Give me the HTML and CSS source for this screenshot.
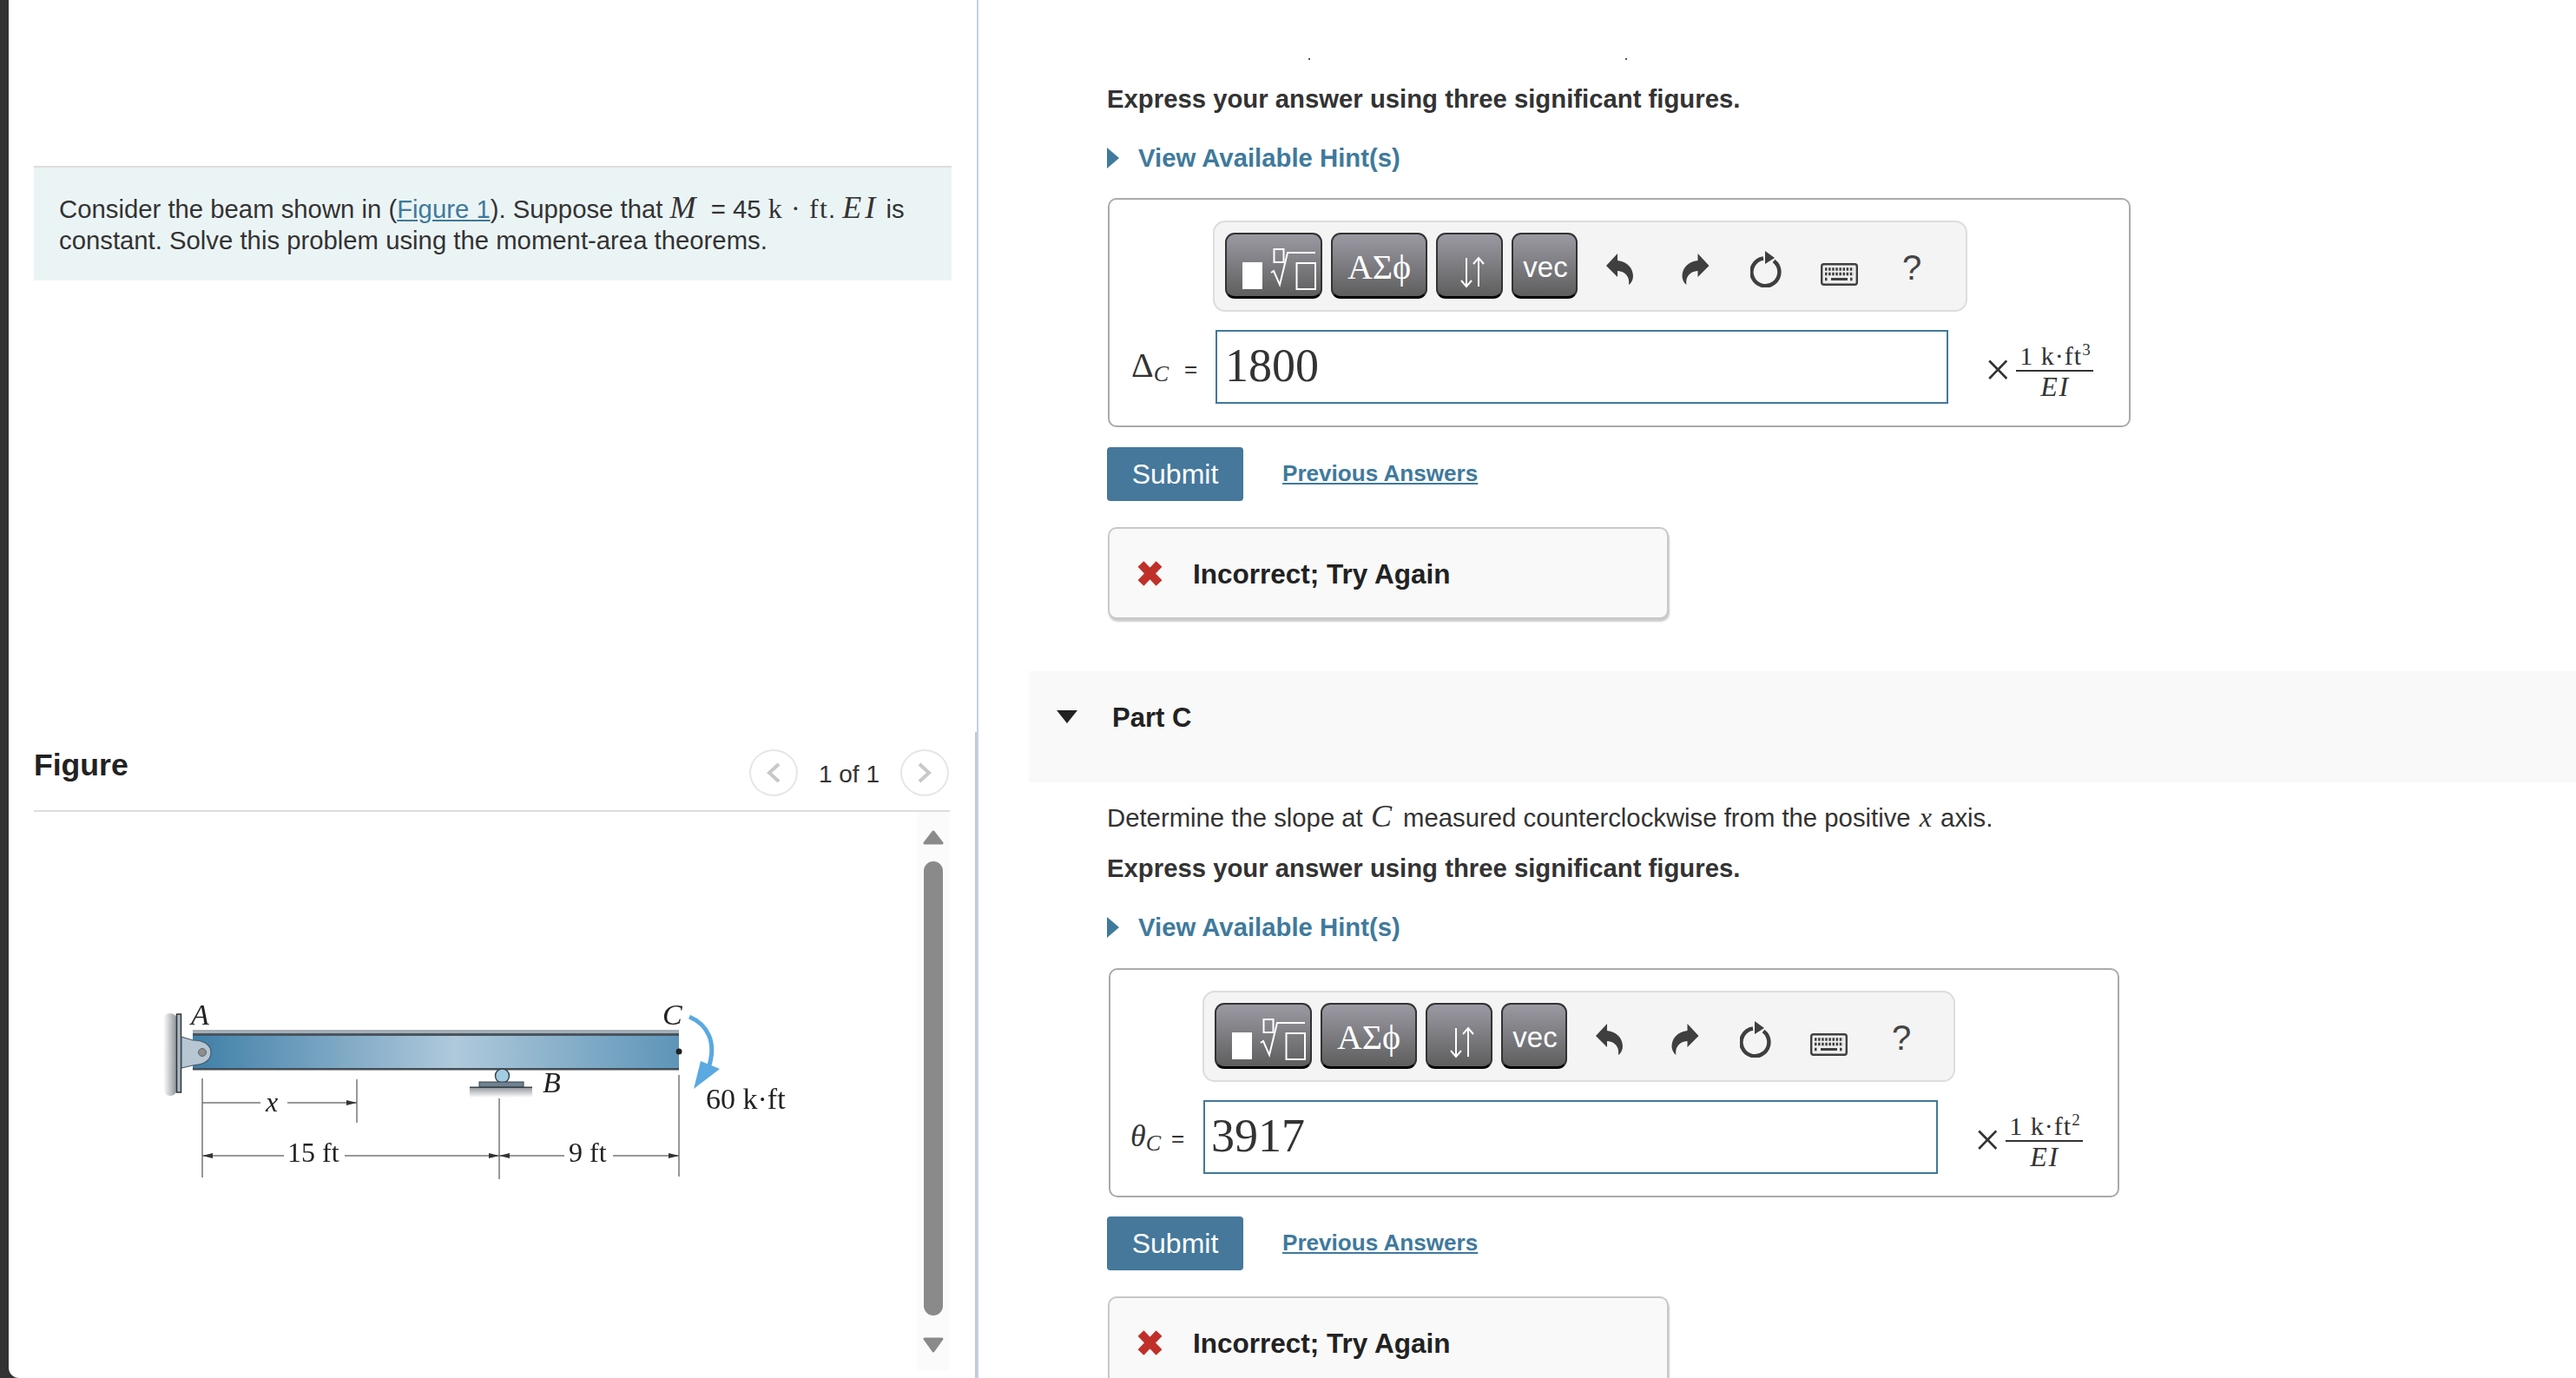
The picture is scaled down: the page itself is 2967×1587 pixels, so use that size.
FILE: index.html
```html
<!DOCTYPE html>
<html lang="en">
<head>
<meta charset="utf-8">
<title>Beam problem</title>
<link rel="stylesheet" href="styles.css">
</head>
<body>
<div class="page">
  <aside class="left">
    <div class="info">
      <div class="info-line">Consider the beam shown in (<a class="link" href="#">Figure 1</a>). Suppose that <span class="m-i big em-m">M</span> = 45 <span class="m">k · ft</span>. <span class="m-i big em-ei">EI</span> is</div>
      <div class="info-line">constant. Solve this problem using the moment-area theorems.</div>
    </div>
    <section class="figure">
      <header class="fig-head">
        <h2 class="fig-title">Figure</h2>
        <div class="fig-nav">
          <span class="circle"><svg width="18" height="26" viewBox="0 0 18 26"><path class="chev" d="M15 3 L4 13 L15 23"/></svg></span>
          <span class="count">1 of 1</span>
          <span class="circle"><svg width="18" height="26" viewBox="0 0 18 26"><path class="chev" d="M3 3 L14 13 L3 23"/></svg></span>
        </div>
      </header>
      <div class="fig-body">
        <div class="fig-canvas">
          <svg class="beam" width="760" height="250" viewBox="0 0 760 250">
            <defs>
              <linearGradient id="web" x1="0" x2="1" y1="0" y2="0">
                <stop offset="0" stop-color="#3f7fa8"/>
                <stop offset="0.54" stop-color="#b0c9db"/>
                <stop offset="1" stop-color="#5d95b8"/>
              </linearGradient>
              <linearGradient id="wallshade" x1="0" x2="1" y1="0" y2="0">
                <stop offset="0" stop-color="#fff"/>
                <stop offset="1" stop-color="#8a8f94"/>
              </linearGradient>
              <linearGradient id="floorshade" x1="0" x2="0" y1="0" y2="1">
                <stop offset="0" stop-color="#9a9ea2"/>
                <stop offset="1" stop-color="#fff"/>
              </linearGradient>
            </defs>
            <rect x="18" y="37" width="16" height="95" rx="8" fill="url(#wallshade)"/>
            <rect x="33.500" y="38" width="5" height="90" fill="#a9bac6" stroke="#333" stroke-width="1.500"/>
            <rect x="52" y="56" width="560" height="46" fill="url(#web)"/>
            <rect x="52" y="56" width="560" height="4" fill="#a4adb4"/>
            <rect x="52" y="60" width="560" height="3" fill="#47555f"/>
            <rect x="52" y="100" width="560" height="2.500" fill="#444e55"/>
            <path d="M39 64 L52 68 C66 68 73 74 73 82 C73 91 66 96 52 97 L39 100 Z" fill="#b6c6d2" stroke="#4a5a66" stroke-width="1.200"/>
            <circle cx="63" cy="82" r="4.500" fill="#8d8d8d" stroke="#666"/>
            <rect x="371" y="123" width="72" height="11" fill="url(#floorshade)"/>
            <circle cx="408.500" cy="109" r="8" fill="#a3cbe2" stroke="#38434b" stroke-width="1.500"/>
            <rect x="382" y="116" width="51" height="6" fill="#6e8290" stroke="#38434b"/>
            <rect x="371" y="121.500" width="72" height="1.500" fill="#38434b"/>
            <circle cx="612" cy="81" r="3.500" fill="#222"/>
            <path class="curl" d="M624 41 C645 50 656 70 646 100"/>
            <path d="M629 124 L637 92 L659 101 Z" fill="#5aa9e0"/>
            <g class="dim">
              <path d="M63 112 V226 M241 113 V163 M405 135 V228 M612 108 V225"/>
              <path d="M63 140 H130 M161 140 H241"/>
              <path d="M63 201 H157 M227 201 H405 M405 201 H480 M536 201 H612"/>
            </g>
            <g class="arrowheads">
              <path d="M241 140 L229 137 V143 Z"/>
              <path d="M63 201 L75 198 V204 Z"/>
              <path d="M405 201 L393 198 V204 Z"/>
              <path d="M405 201 L417 198 V204 Z"/>
              <path d="M612 201 L600 198 V204 Z"/>
            </g>
            <text class="fig-i" x="50" y="50">A</text>
            <text class="fig-i" x="455" y="128">B</text>
            <text class="fig-i" x="593" y="50">C</text>
            <text class="fig-i fig-x" x="136" y="150">x</text>
            <text class="fig-t" x="161" y="208">15 ft</text>
            <text class="fig-t" x="485" y="208">9 ft</text>
            <text class="fig-t fig-wide" x="643" y="147">60 k·ft</text>
          </svg>
        </div>
        <div class="scroll">
          <svg width="24" height="17" viewBox="0 0 24 17"><path class="sc" d="M12 2 L22 15 H2 Z"/></svg>
          <span class="thumb"></span>
          <svg width="24" height="18" viewBox="0 0 24 18"><path class="sc" d="M2 2 H22 L12 16 Z"/></svg>
        </div>
      </div>
    </section>
  </aside>

  <main class="right">
    <span class="dot dot-a"></span>
    <span class="dot dot-b"></span>

    <div class="content">
      <p class="txt strong">Express your answer using three significant figures.</p>
      <p class="hint"><svg width="14" height="24" viewBox="0 0 14 24"><path d="M0 0 L14 12 L0 24 Z"/></svg><a class="hint-link" href="#">View Available Hint(s)</a></p>

      <div class="answer answer-a">
        <div class="toolbar">
          <span class="tb tb-1"><svg width="108" height="72" viewBox="0 0 108 72">
            <rect x="18" y="32" width="23" height="31" fill="#fff"/>
            <rect x="54.500" y="17" width="11" height="15" class="ol"/>
            <path class="ol" d="M51 44 L54 42 L61 58 L70 21 H102"/>
            <rect x="80.500" y="33" width="21.500" height="30" class="ol"/>
          </svg></span>
          <span class="tb tb-2">ΑΣϕ</span>
          <span class="tb tb-3"><svg width="73" height="72" viewBox="0 0 73 72">
            <path class="ol" d="M33 27 V60 M27 53 L33 60 L39 53 M47 60 V27 M41 34 L47 27 L53 34"/>
          </svg></span>
          <span class="tb tb-4">vec</span>
          <svg class="ic ic-undo" width="31" height="36" viewBox="0 0 31 36"><path d="M0 14 L13 0 V8 C24 9 31 17 31 26 C31 30 29 34 26 36 C27 30 25 21 13 20 V27 Z"/></svg>
          <svg class="ic ic-redo" width="32" height="36" viewBox="0 0 31 36"><path transform="matrix(-1 0 0 1 31 0)" d="M0 14 L13 0 V8 C24 9 31 17 31 26 C31 30 29 34 26 36 C27 30 25 21 13 20 V27 Z"/></svg>
          <svg class="ic ic-re" width="37" height="42" viewBox="0 0 37 42"><path class="ring" d="M15 8.500 A16 16 0 1 0 27 11.500"/><path d="M17 0 L28 8 L17 15 Z"/></svg>
          <svg class="ic ic-kb" width="43" height="26" viewBox="0 0 43 26"><rect class="kb" x="1.200" y="1.200" width="40.600" height="23.600" rx="2.500"/><path class="keys" d="M5 7 H38 M5 12.500 H38 M5 18.500 H9 M34 18.500 H38"/><path class="bar" d="M12 18.500 H31"/></svg>
          <span class="q">?</span>
        </div>
        <div class="row">
          <span class="lbl"><span class="sym">Δ</span><span class="sub">C</span><span class="eq">=</span></span>
          <div class="input">1800</div>
          <span class="times">×</span>
          <span class="frac"><span class="num">1 k·ft<sup class="pow">3</sup></span><span class="den">EI</span></span>
        </div>
      </div>

      <div class="actions">
        <button class="submit" type="button">Submit</button>
        <a class="prev" href="#">Previous Answers</a>
      </div>

      <div class="feedback">
        <svg width="31" height="29" viewBox="0 0 31 29"><path class="xmark" d="M5 3.500 L26 25.500 M26 3.500 L5 25.500"/></svg>
        <span class="fb-text">Incorrect; Try Again</span>
      </div>
    </div>

    <div class="part-head">
      <svg width="24" height="15" viewBox="0 0 24 15"><path d="M0 0 H24 L12 15 Z"/></svg>
      <span class="part-title">Part C</span>
    </div>

    <div class="content">
      <p class="txt det">Determine the slope at <span class="m-i big em-c">C</span> measured counterclockwise from the positive <span class="m-i big-x">x</span> axis.</p>
      <p class="txt strong second">Express your answer using three significant figures.</p>
      <p class="hint"><svg width="14" height="24" viewBox="0 0 14 24"><path d="M0 0 L14 12 L0 24 Z"/></svg><a class="hint-link" href="#">View Available Hint(s)</a></p>

      <div class="answer answer-b">
        <div class="toolbar">
          <span class="tb tb-1"><svg width="108" height="72" viewBox="0 0 108 72">
            <rect x="18" y="32" width="23" height="31" fill="#fff"/>
            <rect x="54.500" y="17" width="11" height="15" class="ol"/>
            <path class="ol" d="M51 44 L54 42 L61 58 L70 21 H102"/>
            <rect x="80.500" y="33" width="21.500" height="30" class="ol"/>
          </svg></span>
          <span class="tb tb-2">ΑΣϕ</span>
          <span class="tb tb-3"><svg width="73" height="72" viewBox="0 0 73 72">
            <path class="ol" d="M33 27 V60 M27 53 L33 60 L39 53 M47 60 V27 M41 34 L47 27 L53 34"/>
          </svg></span>
          <span class="tb tb-4">vec</span>
          <svg class="ic ic-undo" width="31" height="36" viewBox="0 0 31 36"><path d="M0 14 L13 0 V8 C24 9 31 17 31 26 C31 30 29 34 26 36 C27 30 25 21 13 20 V27 Z"/></svg>
          <svg class="ic ic-redo" width="32" height="36" viewBox="0 0 31 36"><path transform="matrix(-1 0 0 1 31 0)" d="M0 14 L13 0 V8 C24 9 31 17 31 26 C31 30 29 34 26 36 C27 30 25 21 13 20 V27 Z"/></svg>
          <svg class="ic ic-re" width="37" height="42" viewBox="0 0 37 42"><path class="ring" d="M15 8.500 A16 16 0 1 0 27 11.500"/><path d="M17 0 L28 8 L17 15 Z"/></svg>
          <svg class="ic ic-kb" width="43" height="26" viewBox="0 0 43 26"><rect class="kb" x="1.200" y="1.200" width="40.600" height="23.600" rx="2.500"/><path class="keys" d="M5 7 H38 M5 12.500 H38 M5 18.500 H9 M34 18.500 H38"/><path class="bar" d="M12 18.500 H31"/></svg>
          <span class="q">?</span>
        </div>
        <div class="row">
          <span class="lbl"><span class="sym sym-i">θ</span><span class="sub">C</span><span class="eq">=</span></span>
          <div class="input">3917</div>
          <span class="times">×</span>
          <span class="frac"><span class="num">1 k·ft<sup class="pow">2</sup></span><span class="den">EI</span></span>
        </div>
      </div>

      <div class="actions">
        <button class="submit" type="button">Submit</button>
        <a class="prev" href="#">Previous Answers</a>
      </div>

      <div class="feedback">
        <svg width="31" height="29" viewBox="0 0 31 29"><path class="xmark" d="M5 3.500 L26 25.500 M26 3.500 L5 25.500"/></svg>
        <span class="fb-text">Incorrect; Try Again</span>
      </div>
    </div>
  </main>
</div>
</body>
</html>
```
FILE: styles.css
```css
* { box-sizing: border-box; }
html, body { margin: 0; padding: 0; height: 100%; overflow: hidden; background: #fff; }
body { font-family: "Liberation Sans", Arial, sans-serif; color: #333; font-size: 29.300px; }

.page { display: flex; width: 2967px; height: 1587px; background: #333; overflow: hidden; padding-left: 10px; }

/* left column */
.left { width: 1117px; flex: none; height: 100%; background: #fff; border-right: 2px solid #c4d0e0; border-bottom-left-radius: 12px; padding-top: 191px; }
.info { margin-left: 29px; width: 1057px; height: 132px; background: #ebf4f5; border-top: 2px solid #ddd; padding: 30px 20px 0 29px; }
.info-line { height: 36px; line-height: 36px; white-space: nowrap; }
.link { color: #3f7a9c; text-decoration: underline; }
.m { font-family: "Liberation Serif", serif; font-size: 32px; letter-spacing: 1.200px; line-height: 0; }
.m-i { font-family: "Liberation Serif", serif; font-style: italic; line-height: 0; }
.big { font-size: 36px; }
.big-x { font-size: 32px; margin: 0 2px; }
.em-m { letter-spacing: 9px; }
.em-ei { letter-spacing: 4px; }
.em-c { letter-spacing: 2px; margin: 0 3px 0 1px; }

.figure { margin-top: 520px; height: 744px; padding: 0 29px; border-right: 2px solid #bccbde; }
.fig-head { display: flex; justify-content: space-between; align-items: flex-start; height: 92px; border-bottom: 2px solid #ddd; padding-top: 17px; }
.fig-title { margin: 3px 0 0; font-size: 35.600px; line-height: 36px; font-weight: 700; color: #222; }
.fig-nav { display: flex; align-items: center; gap: 24px; margin-right: 1px; }
.circle { width: 56px; height: 54px; border: 2px solid #e6e6e6; border-radius: 50%; display: flex; align-items: center; justify-content: center; }
.chev { fill: none; stroke: #c8c8c8; stroke-width: 4; }
.count { font-size: 28px; line-height: 54px; margin-top: 5px; }

.fig-body { display: flex; justify-content: space-between; height: 643px; }
.fig-canvas { padding: 195px 0 0 131px; }
.beam { display: block; filter: blur(0.6px); }
.curl { fill: none; stroke: #5aa9e0; stroke-width: 5; }
.dim path { fill: none; stroke: #777; stroke-width: 1.500; }
.arrowheads path { fill: #333; }
.fig-i { font-family: "Liberation Serif", serif; font-style: italic; font-size: 34px; fill: #222; }
.fig-x { font-size: 32px; }
.fig-t { font-family: "Liberation Serif", serif; font-size: 32px; fill: #222; }
.fig-wide { font-size: 34px; }

.scroll { width: 38px; background: #fbfbfb; display: flex; flex-direction: column; align-items: center; padding-top: 21px; }
.sc { fill: #8a8a8a; stroke: #8a8a8a; stroke-width: 3; stroke-linejoin: round; }
.thumb { width: 22px; height: 523px; margin: 19px 0 25px; background: #8a8a8a; border-radius: 11px; }

/* right column */
.right { flex: 1; min-width: 0; height: 100%; background: #fff; position: relative; padding-top: 96px; }
.dot { position: absolute; top: 67px; width: 2px; height: 2px; background: #555; }
.dot-a { left: 380px; }
.dot-b { left: 745px; }
.content { padding-left: 148px; }

.txt { margin: 0; height: 36px; line-height: 36px; white-space: nowrap; }
.strong { font-weight: 700; }
.det { margin-top: 23px; }
.second { margin-top: 22px; }
.hint { margin: 32px 0 0; display: flex; align-items: center; gap: 22px; height: 36px; }
.hint svg { fill: #3f7a9c; flex: none; }
.hint-link { color: #3f7a9c; font-weight: 700; text-decoration: none; }

.answer { margin-top: 28px; height: 264px; border: 2px solid #aaa; border-radius: 10px; background: #fff; padding-top: 24px; }
.answer-a { width: 1178px; margin-left: 1px; }
.answer-b { width: 1164px; margin: 29px 0 -1px 2px; }
.answer-a .toolbar { margin-left: 119px; width: 869px; }
.answer-b .toolbar { margin-left: 106px; width: 867px; }

.toolbar { height: 105px; background: #f4f4f4; border: 2px solid #ddd; border-radius: 14px; padding: 12px; display: flex; align-items: flex-start; }
.tb { height: 76px; flex: none; margin-right: 10px; display: flex; align-items: center; justify-content: center; color: #fff; border: 2px solid #333; border-bottom: 3px solid #000; border-radius: 11px; background: linear-gradient(#9b9aa3, #5e5e5e); }
.tb svg { display: block; }
.tb-1 { width: 112px; }
.tb-2 { width: 111px; padding-top: 4px; font-family: "Liberation Serif", serif; font-size: 40px; }
.tb-3 { width: 77px; }
.tb-4 { width: 76px; margin-right: 0; padding: 4px 0 0 2px; font-size: 33px; }
.ol { fill: none; stroke: #fff; stroke-width: 2; }

.ic { flex: none; fill: #3f3f3f; }
.ic-undo { margin: 24px 0 0 33px; }
.ic-redo { margin: 24px 0 0 56px; }
.ic-re { margin: 21px 0 0 47px; }
.ic-kb { margin: 35px 0 0 44px; }
.ring { fill: none; stroke: #3f3f3f; stroke-width: 4.500; }
.kb { fill: #eee; stroke: #3f3f3f; stroke-width: 2.400; }
.keys { fill: none; stroke: #3f3f3f; stroke-width: 3.500; stroke-dasharray: 2.500 1.600; }
.bar { fill: none; stroke: #3f3f3f; stroke-width: 3; }
.q { margin: 17px 0 0 51px; font-size: 40px; line-height: 46px; color: #444; }

.row { display: flex; align-items: center; margin-top: 21px; height: 85px; }
.answer-a .row { padding-left: 25px; }
.answer-b .row { padding-left: 23px; }
.lbl { flex: none; display: flex; align-items: baseline; font-family: "Liberation Serif", serif; color: #333; margin-top: -4px; }
.answer-a .lbl { width: 97px; }
.answer-b .lbl { width: 84px; }
.sym { font-size: 40px; }
.sym-i { font-style: italic; font-size: 36px; }
.sub { font-style: italic; font-size: 26px; position: relative; top: 5px; }
.eq { font-family: "Liberation Sans", sans-serif; font-size: 26px; margin-left: 18px; }
.answer-b .eq { margin-left: 12px; }
.input { flex: none; height: 85px; border: 2px solid #41789b; padding-left: 9px; font-family: "Liberation Serif", serif; font-size: 54px; line-height: 78px; color: #333; background: #fff; }
.answer-a .input { width: 844px; }
.answer-b .input { width: 846px; padding-left: 7px; }
.times { flex: none; margin: 6px 6px 0 42px; font-family: "Liberation Serif", serif; font-size: 54px; line-height: 40px; color: #333; font-weight: 400; }
.frac { flex: none; display: flex; flex-direction: column; align-items: center; width: 89px; margin-top: 10px; font-family: "Liberation Serif", serif; font-size: 30px; color: #333; }
.num { border-bottom: 2px solid #333; width: 100%; text-align: center; line-height: 34px; height: 35px; white-space: nowrap; letter-spacing: 1px; }
.pow { font-size: 19px; line-height: 0; vertical-align: 11px; letter-spacing: 0; }
.den { font-style: italic; font-size: 32px; line-height: 34px; letter-spacing: 1.500px; }

.actions { display: flex; align-items: center; margin-top: 23px; gap: 45px; }
.submit { width: 157px; height: 62px; border: 0; border-radius: 4px; background: #45789b; color: #fff; font-family: "Liberation Sans", sans-serif; font-size: 32px; padding: 0; }
.prev { color: #3f7a9c; font-weight: 700; font-size: 26.100px; text-decoration: underline; margin-top: -1px; }

.feedback { margin: 30px 0 0 1px; width: 646px; height: 106px; background: #f9f9f9; border: 2px solid #c8c8c8; border-radius: 10px; box-shadow: 1px 3px 2px #ccc; display: flex; align-items: center; padding-left: 31px; gap: 34px; }
.xmark { fill: none; stroke: #c0302a; stroke-width: 9.500; stroke-linecap: butt; }
.fb-text { font-weight: 700; font-size: 31.500px; color: #222; margin-top: 3px; }

.part-head { margin: 60px 0 0 58px; height: 128px; background: #f9f9f9; display: flex; align-items: flex-start; padding: 45px 0 0 32px; gap: 40px; }
.part-head svg { fill: #222; }
.part-title { font-weight: 700; font-size: 31px; line-height: 16px; margin-top: 1px; color: #222; }
```
